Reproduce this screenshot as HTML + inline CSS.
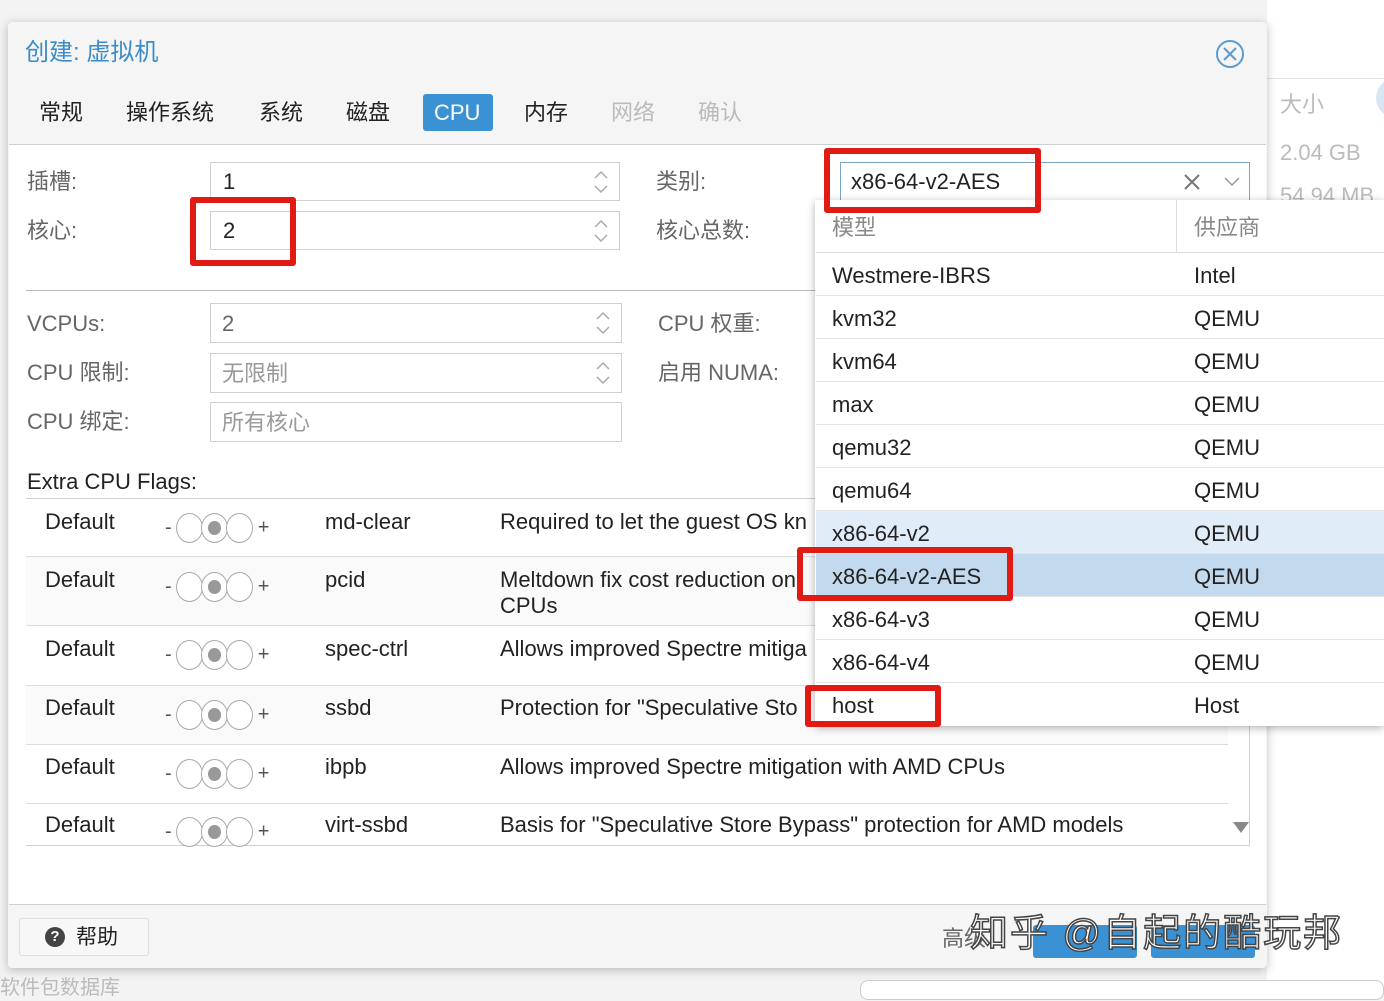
<!DOCTYPE html>
<html><head><meta charset="utf-8"><style>
*{margin:0;padding:0;box-sizing:border-box}
body{width:1384px;height:991px;overflow:hidden;background:#f3f3f3;font-family:"Liberation Sans","Noto Sans CJK SC",sans-serif;position:relative;color:#222}
.a{position:absolute}
.t{position:absolute;font-size:22px;line-height:26px;white-space:nowrap}
.g{color:#666}
.in{position:absolute;background:#fff;border:1px solid #cfcfcf}
.sp{position:absolute;right:10px;top:4px}
.red{position:absolute;border:6px solid #e01b14;border-radius:3px}
.row{position:absolute;left:26px;width:1202px;border-bottom:1px solid #ddd;background:#fff}
.dr{position:absolute;left:816px;width:568px;height:43px;border-bottom:1px solid #e4e4e4}
.rad{position:absolute;font-size:20px;color:#555}
.c{display:inline-block;width:27px;height:30px;border:1px solid #aaa;border-radius:50%;vertical-align:middle;margin:0 -1px;position:relative;background:#fff}
.c.on:after{content:"";position:absolute;left:6px;top:7px;width:13px;height:14px;border-radius:50%;background:#999}
</style></head><body>
<div class="a" style="left:1267px;top:0;width:117px;height:991px;background:#fff"></div>
<div class="a" style="left:1267px;top:78px;width:117px;height:1px;background:#e6e6e6"></div>
<div class="t" style="left:1280px;top:92px;color:#bbb">大小</div>
<div class="t" style="left:1280px;top:140px;color:#bbb">2.04 GB</div>
<div class="t" style="left:1280px;top:183px;color:#bbb">54.94 MB</div>
<div class="a" style="left:1376px;top:78px;width:40px;height:40px;border-radius:50%;background:#d8e6f3"></div>
<div class="t" style="left:0;top:975px;color:#bbb;font-size:20px">软件包数据库</div>
<div class="a" style="left:860px;top:980px;width:524px;height:20px;border:1px solid #ccc;border-radius:8px;background:#fff"></div>
<div class="a" style="left:8px;top:22px;width:1259px;height:946px;background:#f5f5f5;border-radius:4px;box-shadow:0 2px 10px rgba(0,0,0,.25)"></div>
<div class="t" style="left:25px;top:40px;font-size:24px;color:#3a8dc8">创建: 虚拟机</div>
<svg class="a" style="left:1215px;top:39px" width="30" height="30"><circle cx="15" cy="15" r="13" fill="none" stroke="#5b9bd0" stroke-width="2"/><path d="M9 9L21 21M21 9L9 21" stroke="#5b9bd0" stroke-width="2"/></svg>
<div class="t" style="left:39px;top:100px">常规</div>
<div class="t" style="left:126px;top:100px">操作系统</div>
<div class="t" style="left:259px;top:100px">系统</div>
<div class="t" style="left:346px;top:100px">磁盘</div>
<div class="a" style="left:423px;top:94px;width:70px;height:37px;background:#3a92d4;border-radius:3px"></div>
<div class="t" style="left:434px;top:100px;color:#fff">CPU</div>
<div class="t" style="left:524px;top:100px">内存</div>
<div class="t" style="left:611px;top:100px;color:#bbb">网络</div>
<div class="t" style="left:698px;top:100px;color:#bbb">确认</div>
<div class="a" style="left:9px;top:144px;width:1257px;height:761px;background:#fff;border-top:1px solid #d0d0d0;border-bottom:1px solid #d0d0d0"></div>
<div class="t g" style="left:27px;top:169px">插槽:</div>
<div class="in" style="left:210px;top:162px;width:410px;height:39px"><div class="t" style="left:12px;top:6px">1</div><svg class="sp" width="16" height="30"><path d="M2 11L8 5L14 11M2 19L8 25L14 19" fill="none" stroke="#aaa" stroke-width="1.5"/></svg></div>
<div class="t g" style="left:27px;top:218px">核心:</div>
<div class="in" style="left:210px;top:211px;width:410px;height:39px"><div class="t" style="left:12px;top:6px">2</div><svg class="sp" width="16" height="30"><path d="M2 11L8 5L14 11M2 19L8 25L14 19" fill="none" stroke="#aaa" stroke-width="1.5"/></svg></div>
<div class="t g" style="left:656px;top:169px">类别:</div>
<div class="t g" style="left:656px;top:218px">核心总数:</div>
<div class="in" style="left:840px;top:162px;width:410px;height:39px;border-color:#7aa6c8"><div class="t" style="left:10px;top:6px">x86-64-v2-AES</div><svg class="a" style="left:343px;top:11px" width="16" height="16"><path d="M1 1L15 15M15 1L1 15" stroke="#777" stroke-width="2"/></svg><svg class="a" style="left:382px;top:12px" width="18" height="12"><path d="M2 3L9 10L16 3" fill="none" stroke="#999" stroke-width="1.5"/></svg></div>
<div class="a" style="left:26px;top:290px;width:790px;height:1px;background:#bbb"></div>
<div class="t g" style="left:27px;top:311px">VCPUs:</div>
<div class="in" style="left:210px;top:303px;width:412px;height:40px"><div class="t g" style="left:11px;top:7px">2</div><svg class="sp" width="16" height="30"><path d="M2 11L8 5L14 11M2 19L8 25L14 19" fill="none" stroke="#aaa" stroke-width="1.5"/></svg></div>
<div class="t g" style="left:27px;top:360px">CPU 限制:</div>
<div class="in" style="left:210px;top:353px;width:412px;height:40px"><div class="t" style="left:11px;top:7px;color:#999">无限制</div><svg class="sp" width="16" height="30"><path d="M2 11L8 5L14 11M2 19L8 25L14 19" fill="none" stroke="#aaa" stroke-width="1.5"/></svg></div>
<div class="t g" style="left:27px;top:409px">CPU 绑定:</div>
<div class="in" style="left:210px;top:402px;width:412px;height:40px"><div class="t" style="left:11px;top:7px;color:#999">所有核心</div></div>
<div class="t g" style="left:658px;top:311px">CPU 权重:</div>
<div class="t g" style="left:658px;top:360px">启用 NUMA:</div>
<div class="t" style="left:27px;top:469px">Extra CPU Flags:</div>
<div class="a" style="left:26px;top:498px;width:1224px;height:348px;border:1px solid #d0d0d0"></div>
<div class="row" style="top:499px;height:58px"></div>
<div class="row" style="top:557px;height:69px;background:#fafafa"></div>
<div class="row" style="top:626px;height:60px"></div>
<div class="row" style="top:686px;height:59px;background:#fafafa"></div>
<div class="row" style="top:745px;height:59px"></div>
<div class="row" style="top:804px;height:41px;border:none"></div>
<div class="t" style="left:45px;top:509px">Default</div><div class="rad" style="left:165px;top:513px">- <span class="c"></span><span class="c on"></span><span class="c"></span> +</div><div class="t" style="left:325px;top:509px">md-clear</div><div class="t" style="left:500px;top:509px">Required to let the guest OS kn</div>
<div class="t" style="left:45px;top:567px">Default</div><div class="rad" style="left:165px;top:572px">- <span class="c"></span><span class="c on"></span><span class="c"></span> +</div><div class="t" style="left:325px;top:567px">pcid</div><div class="t" style="left:500px;top:567px">Meltdown fix cost reduction on<br>CPUs</div>
<div class="t" style="left:45px;top:636px">Default</div><div class="rad" style="left:165px;top:640px">- <span class="c"></span><span class="c on"></span><span class="c"></span> +</div><div class="t" style="left:325px;top:636px">spec-ctrl</div><div class="t" style="left:500px;top:636px">Allows improved Spectre mitiga</div>
<div class="t" style="left:45px;top:695px">Default</div><div class="rad" style="left:165px;top:700px">- <span class="c"></span><span class="c on"></span><span class="c"></span> +</div><div class="t" style="left:325px;top:695px">ssbd</div><div class="t" style="left:500px;top:695px">Protection for "Speculative Sto</div>
<div class="t" style="left:45px;top:754px">Default</div><div class="rad" style="left:165px;top:759px">- <span class="c"></span><span class="c on"></span><span class="c"></span> +</div><div class="t" style="left:325px;top:754px">ibpb</div><div class="t" style="left:500px;top:754px">Allows improved Spectre mitigation with AMD CPUs</div>
<div class="t" style="left:45px;top:812px">Default</div><div class="rad" style="left:165px;top:817px">- <span class="c"></span><span class="c on"></span><span class="c"></span> +</div><div class="t" style="left:325px;top:812px">virt-ssbd</div><div class="t" style="left:500px;top:812px">Basis for "Speculative Store Bypass" protection for AMD models</div>
<div class="a" style="left:1233px;top:822px;width:0;height:0;border-left:8px solid transparent;border-right:8px solid transparent;border-top:11px solid #888"></div>
<div class="a" style="left:19px;top:918px;width:130px;height:38px;background:#f7f7f7;border:1px solid #ddd;border-radius:3px"></div>
<div class="a" style="left:45px;top:927px;width:20px;height:20px;border-radius:50%;background:#444;color:#fff;font-size:15px;font-weight:bold;text-align:center;line-height:20px">?</div>
<div class="t" style="left:76px;top:925px;font-size:21px">帮助</div>
<div class="t" style="left:942px;top:926px;color:#666">高级</div>
<div class="a" style="left:1033px;top:925px;width:104px;height:33px;background:#3a92d4;border-radius:3px"></div>
<div class="a" style="left:1151px;top:925px;width:104px;height:33px;background:#3a92d4;border-radius:3px"></div>
<div class="t" style="left:970px;top:912px;font-size:38px;line-height:44px;color:#fff;-webkit-text-stroke:1.5px #444;letter-spacing:2px">知乎 @自起的酷玩邦</div>
<div class="a" style="left:815px;top:200px;width:569px;height:526px;background:#fff;box-shadow:0 2px 8px rgba(0,0,0,.3)"></div>
<div class="dr" style="top:200px;height:53px;border-bottom:1px solid #ddd"></div>
<div class="a" style="left:1176px;top:200px;width:1px;height:53px;background:#ddd"></div>
<div class="t" style="left:832px;top:215px;color:#888">模型</div><div class="t" style="left:1194px;top:215px;color:#888">供应商</div>
<div class="dr" style="top:253px"></div><div class="t" style="left:832px;top:263px">Westmere-IBRS</div><div class="t" style="left:1194px;top:263px">Intel</div>
<div class="dr" style="top:296px"></div><div class="t" style="left:832px;top:306px">kvm32</div><div class="t" style="left:1194px;top:306px">QEMU</div>
<div class="dr" style="top:339px"></div><div class="t" style="left:832px;top:349px">kvm64</div><div class="t" style="left:1194px;top:349px">QEMU</div>
<div class="dr" style="top:382px"></div><div class="t" style="left:832px;top:392px">max</div><div class="t" style="left:1194px;top:392px">QEMU</div>
<div class="dr" style="top:425px"></div><div class="t" style="left:832px;top:435px">qemu32</div><div class="t" style="left:1194px;top:435px">QEMU</div>
<div class="dr" style="top:468px"></div><div class="t" style="left:832px;top:478px">qemu64</div><div class="t" style="left:1194px;top:478px">QEMU</div>
<div class="dr" style="top:511px;background:#e0ecf7"></div><div class="t" style="left:832px;top:521px">x86-64-v2</div><div class="t" style="left:1194px;top:521px">QEMU</div>
<div class="dr" style="top:554px;background:#c2d9ee"></div><div class="t" style="left:832px;top:564px">x86-64-v2-AES</div><div class="t" style="left:1194px;top:564px">QEMU</div>
<div class="dr" style="top:597px"></div><div class="t" style="left:832px;top:607px">x86-64-v3</div><div class="t" style="left:1194px;top:607px">QEMU</div>
<div class="dr" style="top:640px"></div><div class="t" style="left:832px;top:650px">x86-64-v4</div><div class="t" style="left:1194px;top:650px">QEMU</div>
<div class="dr" style="top:683px;border:none"></div><div class="t" style="left:832px;top:693px">host</div><div class="t" style="left:1194px;top:693px">Host</div>
<div class="red" style="left:190px;top:197px;width:106px;height:69px"></div>
<div class="red" style="left:824px;top:148px;width:217px;height:65px"></div>
<div class="red" style="left:797px;top:547px;width:216px;height:54px"></div>
<div class="red" style="left:805px;top:685px;width:136px;height:42px"></div>
</body></html>
